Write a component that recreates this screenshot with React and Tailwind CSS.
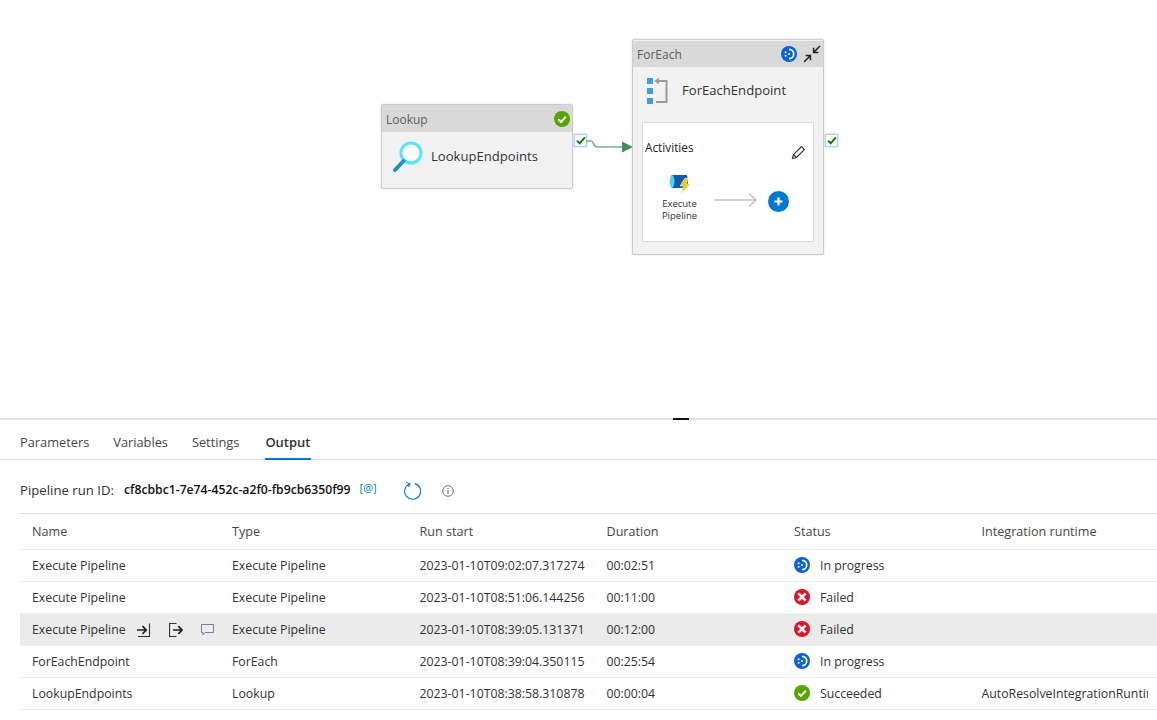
function Success({ s = 16 }) {
  return (
    <svg width={s} height={s} viewBox="0 0 16 16" className="shrink-0">
      <circle cx="8" cy="8" r="8" fill="#57a300" />
      <path d="M4.2 8.3 L7 11 L11.9 5.6" fill="none" stroke="#fff" strokeWidth="2" />
    </svg>
  );
}
function Failed({ s = 16 }) {
  return (
    <svg width={s} height={s} viewBox="0 0 16 16" className="shrink-0">
      <circle cx="8" cy="8" r="8" fill="#e81123" />
      <path d="M4.4 4.4 L11.6 11.6 M11.6 4.4 L4.4 11.6" fill="none" stroke="#fff" strokeWidth="2.6" />
    </svg>
  );
}
function Progress({ s = 16 }) {
  return (
    <svg width={s} height={s} viewBox="0 0 16 16" className="shrink-0">
      <circle cx="8" cy="8" r="8" fill="#0b62d6" />
      <path d="M8 3.3 A4.7 4.7 0 0 1 8 12.7" fill="none" stroke="#fff" strokeWidth="1.7" />
      <circle cx="4.6" cy="6.2" r="1" fill="#fff" />
      <circle cx="4.6" cy="9.8" r="1" fill="#fff" />
      <circle cx="8" cy="8" r="1" fill="#fff" />
    </svg>
  );
}
function Port({ className }) {
  return (
    <div className={"absolute w-[13px] h-[13px] bg-white border border-[#a9d6f5] shadow-[0_0_2px_#8cc8ee] flex items-center justify-center " + className}>
      <svg width="10" height="9" viewBox="0 0 10 9">
        <path d="M1 4.6 L3.7 7.2 L9 1.4" fill="none" stroke="#107c10" strokeWidth="2" />
      </svg>
    </div>
  );
}

const rows = [
  { name: "Execute Pipeline", type: "Execute Pipeline", start: "2023-01-10T09:02:07.317274", dur: "00:02:51", status: "In progress", ir: "" },
  { name: "Execute Pipeline", type: "Execute Pipeline", start: "2023-01-10T08:51:06.144256", dur: "00:11:00", status: "Failed", ir: "" },
  { name: "Execute Pipeline", type: "Execute Pipeline", start: "2023-01-10T08:39:05.131371", dur: "00:12:00", status: "Failed", ir: "", hover: true },
  { name: "ForEachEndpoint", type: "ForEach", start: "2023-01-10T08:39:04.350115", dur: "00:25:54", status: "In progress", ir: "" },
  { name: "LookupEndpoints", type: "Lookup", start: "2023-01-10T08:38:58.310878", dur: "00:00:04", status: "Succeeded", ir: "AutoResolveIntegrationRuntime" },
];

const cols = "grid grid-cols-[200px_187.5px_187px_187.5px_187.5px_178.5px]";

function StatusIcon({ status }) {
  if (status === "Failed") return <Failed />;
  if (status === "Succeeded") return <Success />;
  return <Progress />;
}

function RowActions() {
  return (
    <div className="flex items-center ml-[11px] gap-[18px]">
      <svg width="14" height="14" viewBox="0 0 14 14">
        <path d="M0 7 H9 M5.5 3.2 L9.2 7 L5.5 10.8" fill="none" stroke="#222" strokeWidth="1.7" />
        <path d="M12.5 .5 V13.5 H1" fill="none" stroke="#333" strokeWidth="1.1" />
      </svg>
      <svg width="14" height="14" viewBox="0 0 14 14">
        <path d="M7.5 .5 H.5 V13.5 H7.5" fill="none" stroke="#333" strokeWidth="1.1" />
        <path d="M4 7 H13 M9.3 3.2 L13 7 L9.3 10.8" fill="none" stroke="#222" strokeWidth="1.7" />
      </svg>
      <svg width="13" height="12" viewBox="0 0 13 12">
        <path d="M.5 .5 H12.5 V8.5 H4 L2 11 V8.5 H.5 Z" fill="none" stroke="#7a7a9a" strokeWidth="1" />
      </svg>
    </div>
  );
}

export default function App() {
  return (
    <div className="w-[1157px] h-[720px] overflow-hidden bg-white text-[#323130] text-[12.3px] font-['Open_Sans','Noto_Sans',sans-serif]">
      {/* canvas */}
      <div className="relative h-[418px]">
        {/* Lookup node */}
        <div className="absolute left-[381px] top-[104px] w-[192px] h-[85px] bg-[#f2f2f2] border border-[#cccccc] rounded-[2px] shadow-[0_0_2px_rgba(0,0,0,0.15)]">
          <div className="h-[27px] bg-[#d9d9d9] flex items-center justify-between pl-[4px] pr-[2px] text-[12px] text-[#605e5c]">
            <span className="mt-[2px]">Lookup</span>
            <Success />
          </div>
          <div className="flex items-center pl-[11px] h-[50px]">
            <svg width="30" height="32" viewBox="0 0 30 32">
              <circle cx="18" cy="12" r="10" fill="#fff" stroke="#50e6ff" strokeWidth="3" />
              <path d="M10.5 20 L2 29" stroke="#1b93c4" strokeWidth="4" strokeLinecap="round" />
            </svg>
            <span className="ml-[8px] text-[13.1px] text-[#323130]">LookupEndpoints</span>
          </div>
        </div>
        <Port className="left-[574px] top-[134px]" />

        {/* connector */}
        <svg className="absolute left-[586px] top-[136px]" width="48" height="20" viewBox="0 0 48 20">
          <path d="M0 5 H5 C8 5 7 11 11 11 H36" fill="none" stroke="#7fae8a" strokeWidth="1.6" />
          <path d="M36 5.5 L47 11 L36 16.5 Z" fill="#4a8f55" />
        </svg>

        {/* ForEach node */}
        <div className="absolute left-[632px] top-[39px] w-[192px] h-[216px] bg-[#f2f2f2] border border-[#cccccc] rounded-[2px] shadow-[0_0_2px_rgba(0,0,0,0.15)]">
          <div className="h-[26px] mt-[1px] bg-[#d9d9d9] flex items-center pl-[4px] text-[12px] text-[#605e5c]">
            <span className="mt-[2px]">ForEach</span>
            <div className="ml-auto mr-[2px] flex items-center gap-[6px]">
              <Progress />
              <svg width="18" height="18" viewBox="0 0 17 17">
                <path d="M16 1 L10 7 M10 2.5 V7 H14.5 M1 16 L7 10 M2.5 10 H7 V14.5" fill="none" stroke="#222" strokeWidth="1.4" />
              </svg>
            </div>
          </div>
          <div className="flex items-center pl-[14px] h-[50px]">
            <svg width="21" height="28" viewBox="0 0 21 28">
              <rect x="0" y="0" width="6" height="6" fill="#3f9be8" />
              <rect x="0" y="10" width="6" height="6" fill="#3f9be8" />
              <rect x="0" y="20" width="6" height="6" fill="#3f9be8" />
              <path d="M9 3 H19.5 V24 H9" fill="none" stroke="#9a9a9a" strokeWidth="2" />
              <path d="M12 .5 L8.5 3 L12 5.5" fill="none" stroke="#9a9a9a" strokeWidth="1.4" />
            </svg>
            <span className="ml-[14px] -mt-[2px] text-[13.1px] text-[#323130]">ForEachEndpoint</span>
          </div>
          <div className="mx-[9px] mt-[5px] h-[120px] bg-white border border-[#dcdcdc] flex flex-col">
            <div className="flex items-start justify-between pl-[2px] pr-[8px] pt-[14px]">
              <span className="text-[11.8px] font-medium text-[#222] leading-[20px]">Activities</span>
              <svg className="mt-[8px] -mr-[1px]" width="15" height="15" viewBox="0 0 15 15">
                <path d="M1.5 13.5 L2.5 9.5 L10.5 1.5 L13.5 4.5 L5.5 12.5 Z M2.5 9.5 L5.5 12.5" fill="none" stroke="#333" strokeWidth="1.1" />
              </svg>
            </div>
            <div className="flex items-start mt-[14px] pl-[14px]">
              <div className="w-[45px] flex flex-col items-center">
                <svg width="22" height="20" viewBox="0 0 22 20">
                  <rect x="3" y="1" width="14" height="13" fill="#0f5fa8" />
                  <ellipse cx="3" cy="7.5" rx="2.4" ry="6.5" fill="#50d4f5" />
                  <ellipse cx="17" cy="7.5" rx="2" ry="6.5" fill="#0a4a85" />
                  <path d="M16 4 L11 12 H14.5 L12 20 L21 10 H17 L20 4 Z" fill="#f5c518" stroke="#fff" strokeWidth=".5" />
                </svg>
                <span className="text-[9.5px] leading-[12px] text-center text-[#323130] mt-[4px]">Execute Pipeline</span>
              </div>
              <svg className="ml-[12px] mt-[18px]" width="44" height="16" viewBox="0 0 44 16">
                <path d="M0 8 H42 M35 1.5 L42 8 L35 14.5" fill="none" stroke="#c4c4c4" strokeWidth="1.6" />
              </svg>
              <svg className="ml-[10px] mt-[17px]" width="21" height="21" viewBox="0 0 21 21">
                <circle cx="10.5" cy="10.5" r="10.5" fill="#0078d4" />
                <path d="M6.5 10.5 H14.5 M10.5 6.5 V14.5" stroke="#fff" strokeWidth="2.2" />
              </svg>
            </div>
          </div>
        </div>
        <Port className="left-[825px] top-[134px]" />
      </div>

      {/* splitter */}
      <div className="relative h-[2px] bg-[#e1e1e1]">
        <div className="absolute left-[673px] top-0 w-[16px] h-[2px] bg-[#111]" />
      </div>

      {/* tabs */}
      <div className="h-[40px] border-b border-[#e1e1e1] flex pl-[20px] gap-[24px] text-[12.8px] text-[#484644]">
        <div className="flex items-center h-[40px] pt-[6px]">Parameters</div>
        <div className="flex items-center h-[40px] pt-[6px]">Variables</div>
        <div className="flex items-center h-[40px] pt-[6px]">Settings</div>
        <div className="flex items-center h-[40px] ml-[2px] pt-[8px] border-b-2 border-[#0078d4] font-semibold text-[13px] text-[#323130]">Output</div>
      </div>

      {/* run id */}
      <div className="h-[53px] flex items-center pl-[20px] pt-[8px]">
        <span className="text-[13.2px]">Pipeline run ID:</span>
        <span className="ml-[10px] text-[12.2px] font-semibold text-[#111]">cf8cbbc1-7e74-452c-a2f0-fb9cb6350f99</span>
        <span className="ml-[9px] -mt-[5px] text-[11px] text-[#0078d4]">[@]</span>
        <svg className="ml-[26px]" width="18" height="18" viewBox="0 0 18 18">
          <path d="M6.5 1.9 A8 8 0 1 0 12 1.6" fill="none" stroke="#0078d4" strokeWidth="1.1" />
          <path d="M3.5 .5 L7 2 L5.6 5" fill="none" stroke="#0078d4" strokeWidth="1.1" />
        </svg>
        <svg className="ml-[21px]" width="12" height="12" viewBox="0 0 12 12">
          <circle cx="6" cy="6" r="5.3" fill="none" stroke="#777" strokeWidth="1" />
          <path d="M6 5 V9 M6 3 V4" stroke="#555" strokeWidth="1" />
        </svg>
      </div>

      {/* table */}
      <div className="ml-[20px] border-t border-[#e1e1e1]">
        <div className={cols + " h-[36px] pt-[2px] border-b border-[#f0f0f0] items-center font-medium text-[12.6px] text-[#484644]"}>
          <div className="pl-[12px]">Name</div>
          <div className="pl-[12px]">Type</div>
          <div className="pl-[12px]">Run start</div>
          <div className="pl-[12px]">Duration</div>
          <div className="pl-[12px]">Status</div>
          <div className="pl-[12px] whitespace-nowrap">Integration runtime</div>
        </div>
        {rows.map((r, i) => (
          <div key={i} className={cols + " h-[32px] border-b border-[#f0f0f0] items-center " + (r.hover ? "bg-[#ebebeb]" : "")}>
            <div className="pl-[12px] pt-[1px] flex items-center">
              <span>{r.name}</span>
              {r.hover && <RowActions />}
            </div>
            <div className="pl-[12px] pt-[1px]">{r.type}</div>
            <div className="pl-[12px] pt-[1px] whitespace-nowrap">{r.start}</div>
            <div className="pl-[12px] pt-[1px]">{r.dur}</div>
            <div className="pl-[12px] flex items-center gap-[10px]">
              <div className="-mt-[1px]"><StatusIcon status={r.status} /></div>
              <span className="mt-[1px]">{r.status}</span>
            </div>
            <div className="pl-[12px] pt-[1px] overflow-hidden whitespace-nowrap">{r.ir}</div>
          </div>
        ))}
      </div>
    </div>
  );
}
